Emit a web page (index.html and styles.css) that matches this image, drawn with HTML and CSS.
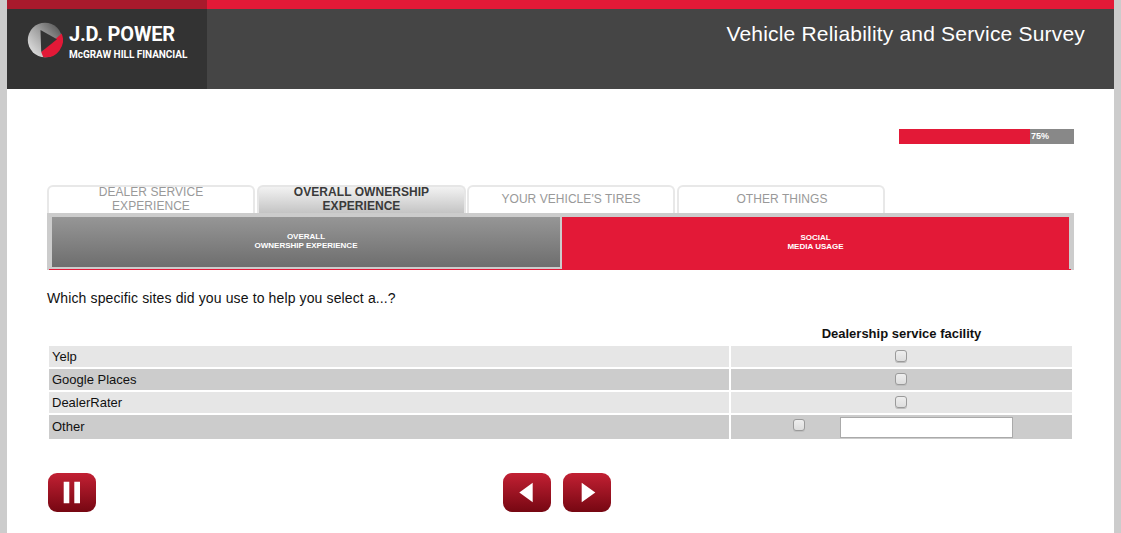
FILE: index.html
```html
<!DOCTYPE html>
<html lang="en">
<head>
<meta charset="utf-8">
<title>Vehicle Reliability and Service Survey</title>
<link rel="stylesheet" href="styles.css">
</head>
<body>
<main class="page">
  <header class="header">
    <div class="brand">
      <svg class="brand-mark" viewBox="0 0 36 36" width="36" height="36" aria-hidden="true">
        <defs>
          <linearGradient id="disc" x1="0.1" y1="0.8" x2="0.9" y2="0.1">
            <stop offset="0" stop-color="#d8d8d8"/>
            <stop offset="0.5" stop-color="#a0a0a0"/>
            <stop offset="1" stop-color="#5a5a5a"/>
          </linearGradient>
        </defs>
        <circle cx="18" cy="18" r="17.2" fill="url(#disc)"/>
        <path d="M34.600 11.400A17.200 17.200 0 0 1 16.200 35.100L14.200 30Z" fill="#e31937"/>
        <path d="M13.500 8 30 17.200 14.200 30Z" fill="#333"/>
      </svg>
      <div class="brand-text">
        <div class="brand-name">J.D. POWER</div>
        <div class="brand-sub">McGRAW HILL FINANCIAL</div>
      </div>
    </div>
    <div class="header-main">
      <h1 class="title">Vehicle Reliability and Service Survey</h1>
    </div>
  </header>

  <div class="content">
    <div class="progress-row">
      <div class="progress">
        <div class="progress-fill"></div>
        <span class="progress-label">75%</span>
      </div>
    </div>

    <nav class="tabs">
      <div class="tab">DEALER SERVICE<br>EXPERIENCE</div>
      <div class="tab tab-active">OVERALL OWNERSHIP<br>EXPERIENCE</div>
      <div class="tab">YOUR VEHICLE'S TIRES</div>
      <div class="tab">OTHER THINGS</div>
    </nav>
    <div class="subnav-bar">
      <div class="subnav">
        <div class="subtab subtab-done">OVERALL<br>OWNERSHIP EXPERIENCE</div>
        <div class="subtab subtab-current">SOCIAL<br>MEDIA USAGE</div>
      </div>
    </div>

    <p class="question">Which specific sites did you use to help you select a...?</p>

    <table class="grid">
      <thead>
        <tr><th class="blank"></th><th class="col-head">Dealership service facility</th></tr>
      </thead>
      <tbody>
        <tr class="odd"><td class="label">Yelp</td><td class="cell"><input type="checkbox" class="check"></td></tr>
        <tr class="even"><td class="label">Google Places</td><td class="cell"><input type="checkbox" class="check"></td></tr>
        <tr class="odd"><td class="label">DealerRater</td><td class="cell"><input type="checkbox" class="check"></td></tr>
        <tr class="even other"><td class="label">Other</td><td class="cell"><div class="other-wrap"><input type="checkbox" class="check"><input type="text" class="other-input"></div></td></tr>
      </tbody>
    </table>

    <div class="actions">
      <button class="btn btn-pause" type="button" aria-label="Pause">
        <svg viewBox="0 0 48 39" width="48" height="39"><path d="M15.700 8.700h5.600v21.600h-5.600zM26.300 8.700h5.700v21.600h-5.700z" fill="#fff"/></svg>
      </button>
      <div class="nav-btns">
        <button class="btn" type="button" aria-label="Back">
          <svg viewBox="0 0 48 39" width="48" height="39"><path d="M16.300 19.500 29.700 9.700v19.600z" fill="#fff"/></svg>
        </button>
        <button class="btn" type="button" aria-label="Next">
          <svg viewBox="0 0 48 39" width="48" height="39"><path d="M18.700 9.700 32.300 19.500l-13.600 9.800z" fill="#fff"/></svg>
        </button>
      </div>
    </div>
  </div>
</main>
</body>
</html>
```
FILE: styles.css
```css
* { box-sizing: border-box; }
html, body { margin: 0; height: 533px; overflow: hidden; }
body {
  background: #cccccc;
  font-family: "Liberation Sans", Arial, sans-serif;
  color: #111;
}
.page { margin: 0 7px; width: 1107px; height: 533px; background: #fff; }

.header { display: flex; height: 89px; border-top: 9px solid #e31937; }
.brand {
  position: relative;
  width: 200px;
  background: #333333;
  display: flex;
  align-items: flex-start;
  padding: 13px 0 0 20px;
  gap: 6px;
}
.brand::before {
  content: "";
  position: absolute;
  left: 0; right: 0; top: -9px; height: 9px;
  background: #a81a2c;
}
.brand-mark { flex: none; }
.brand-text { color: #fff; font-family: Roboto, sans-serif; }
.brand-name { font-size: 20px; font-weight: 700; line-height: 22px; letter-spacing: -0.2px; margin-top: 1px; }
.brand-sub { font-size: 10px; font-weight: 700; line-height: 12px; margin-top: 4px; letter-spacing: -0.04px; white-space: nowrap; }
.header-main {
  flex: 1;
  background: #454545;
  display: flex;
  justify-content: flex-end;
  padding: 12px 29px 0 0;
}
.title { margin: 0; font-size: 21px; line-height: 26px; font-weight: 400; letter-spacing: 0.19px; color: #fff; }

.content { padding: 40px 40px 0; }
.progress-row { display: flex; justify-content: flex-end; height: 15px; }
.progress {
  position: relative;
  width: 175px;
  height: 15px;
  background: #888888;
}
.progress-fill { width: 131px; height: 15px; background: #e31937; }
.progress-label {
  position: absolute;
  left: 132px; top: 1px;
  color: #fff;
  font-size: 9px;
  line-height: 12px;
  font-weight: 700;
}

.tabs { display: flex; gap: 2px; margin-top: 41px; height: 28px; }
.tab {
  width: 208px;
  height: 28px;
  border: 2px solid #e8e8e8;
  border-bottom: 0;
  border-radius: 6px 6px 0 0;
  background: #fff;
  color: #999;
  font-size: 12px;
  line-height: 14px;
  letter-spacing: 0.05px;
  text-align: center;
  display: flex;
  align-items: center;
  justify-content: center;
  padding-bottom: 3px;
}
.tab-active {
  width: 209px;
  background: linear-gradient(#f2f2f2, #c4c4c4);
  border-color: #e6e6e6;
  color: #3a3a3a;
  font-weight: 700;
}
.tab:nth-child(3) { width: 208px; margin-left: -1px; }
.tab:nth-child(4) { padding-left: 2px; }

.subnav-bar { background: #ccc; height: 57px; padding: 4px 3px 0 2px; }
.subnav {
  display: flex;
  height: 53px;
  padding: 0 2px 0 3px;
  border-bottom: 1px solid #e31937;
}
.subtab {
  display: flex;
  align-items: center;
  justify-content: center;
  text-align: center;
  color: #fff;
  font-size: 8px;
  line-height: 9px;
  font-weight: 700;
  padding-bottom: 3px;
}
.subtab-done {
  width: 510px;
  height: 52px;
  background: linear-gradient(#969696, #6e6e6e);
  border-right: 2px solid #ccc;
  border-bottom: 2px solid #ccc;
}
.subtab-current { flex: 1; background: #e31937; height: 52px; }

.question { margin: 20px 0 0; font-size: 14px; line-height: 17px; letter-spacing: 0.125px; color: #111; }

.grid {
  width: 1027px;
  border-collapse: separate;
  border-spacing: 2px;
  table-layout: fixed;
  margin-top: 16px;
  font-size: 13px;
}
.blank { width: 680px; padding: 0; }
.col-head { height: 19px; padding: 0 0 3px; font-size: 13px; line-height: 15px; font-weight: 700; text-align: center; }
.grid td { padding: 0; height: 21px; }
.other td { height: 24px; }
.other .label { padding-bottom: 2px; }
.label { padding-left: 3px !important; line-height: 15px; }
.odd td { background: #e6e6e6; }
.even td { background: #cccccc; }
.cell { text-align: center; }
.check {
  appearance: none;
  display: block;
  width: 12px;
  height: 12px;
  margin: -1px 0 1px 164px;
  border: 1px solid #9a9a9a;
  border-radius: 3px;
  background: linear-gradient(#eeeeee, #dddddd);
  box-shadow: 0 1px 0 #bdbdbd;
}
.other-wrap { display: flex; align-items: center; padding-left: 62px; }
.other-wrap .check { margin: 0 35px 4px 0; }
.other-input {
  width: 173px;
  height: 21px;
  border: 1px solid #aaa;
  background: #fff;
  padding: 0;
  margin-top: 1px;
}

.actions { display: flex; margin-top: 32px; padding-left: 1px; }
.btn {
  display: block;
  width: 48px;
  height: 39px;
  padding: 0;
  border: 0;
  border-radius: 9px;
  background: linear-gradient(#c22033, #760712);
}
.btn svg { display: block; }
.nav-btns { display: flex; gap: 12px; margin-left: 407px; }
```
